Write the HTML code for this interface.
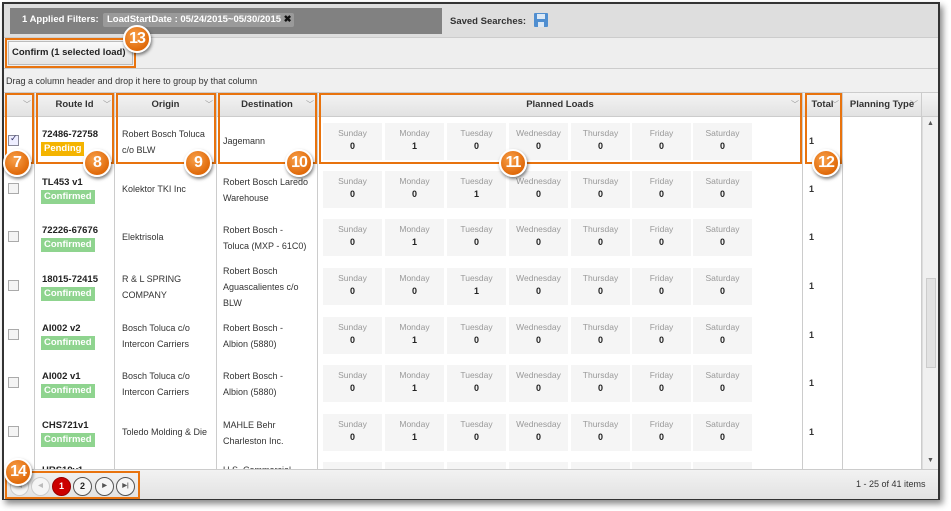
<!DOCTYPE html>
<html><head><meta charset="utf-8"><style>
*{margin:0;padding:0;box-sizing:border-box}
body{width:951px;height:511px;background:#fff;font-family:"Liberation Sans",Arial,sans-serif;font-size:9px;color:#222;position:relative;overflow:hidden}
.a{position:absolute}
#frame{left:2px;top:2px;width:938px;height:498px;border:2px solid #333;box-shadow:3px 4px 6px rgba(0,0,0,.45);background:#e6e6e6;overflow:hidden}
.hdr{position:absolute;top:93px;height:24px;background:linear-gradient(#f4f4f4,#e2e2e2);border-right:1px solid #ccc;border-bottom:1px solid #ccc;font-weight:bold;font-size:9.5px;color:#333;text-align:center;line-height:23px}
.car{position:absolute;right:3px;top:0;color:#999;font-weight:normal;font-size:8px}
.col{position:absolute;top:117px;height:352px;background:#fff;border-right:1px solid #ccc}
.row{position:absolute;left:0;width:922px;height:49px}
.cb{position:absolute;left:8px;width:11px;height:11px;border:1px solid #aaa;background:#f4f4f4}
.id{position:absolute;left:42px;font-weight:bold;font-size:9.5px;color:#222}
.tag{position:absolute;left:41px;height:14px;padding:0 3px;font-weight:bold;font-size:9.5px;color:#fff;line-height:14px}
.txt{position:absolute;font-size:9px;line-height:16px;color:#333}
.day{position:absolute;width:59px;height:37px;background:#f5f5f5;text-align:center}
.day i{display:block;font-style:normal;color:#999;font-size:8.5px;margin-top:5px}
.day b{display:block;font-size:9px;color:#222;margin-top:3px}
.ob{position:absolute;border:2.5px solid #e8730e}
.nc{position:absolute;width:28px;height:28px;border-radius:50%;background:radial-gradient(circle at 40% 35%,#f8a04a,#e06a0a 70%);border:2px solid #fff;box-shadow:1px 2px 3px rgba(0,0,0,.5);color:#fff;font-weight:bold;font-size:16px;text-align:center;line-height:24px;letter-spacing:-1px}
.pg{position:absolute;top:477px;width:19px;height:19px;border-radius:50%;border:1px solid #555;background:#f5f5f5;text-align:center;line-height:17px;font-size:9px;font-weight:bold}
</style></head><body>
<div id="frame" class="a">
</div>
<!-- top filter -->
<div class="a" style="left:4px;top:4px;width:934px;height:33px;background:#dedede"></div>
<div class="a" style="left:10px;top:8px;width:432px;height:26px;background:#818181"></div>
<div class="a" style="left:22px;top:14px;color:#fff;font-weight:bold;font-size:9.5px">1 Applied Filters:</div>
<div class="a" style="left:103px;top:13px;width:191px;height:14px;background:#9a9a9a;border-radius:2px;color:#fff;font-weight:bold;font-size:9.5px;line-height:14px;padding-left:4px">LoadStartDate : 05/24/2015~05/30/2015 <span style="color:#111">✖</span></div>
<div class="a" style="left:450px;top:16px;font-weight:bold;font-size:9.5px;color:#333">Saved Searches:</div>
<svg class="a" style="left:534px;top:13px" width="14" height="14" viewBox="0 0 14 14"><rect x="0" y="0" width="14" height="14" rx="1" fill="#4f8ed0"/><rect x="3" y="1" width="8" height="5" fill="#dbe8f5"/><rect x="4" y="9" width="6" height="5" fill="#dbe8f5"/></svg>
<!-- toolbar -->
<div class="a" style="left:4px;top:37px;width:934px;height:32px;background:#eeeeee;border-top:1px solid #ccc;border-bottom:1px solid #ccc"></div>
<div class="a" style="left:8px;top:41px;width:125px;height:24px;background:linear-gradient(#fafafa,#e4e4e4);border:1px solid #bbb;font-weight:bold;font-size:9.5px;line-height:22px;padding-left:3px;color:#222">Confirm (1 selected load)</div>
<div class="a" style="left:4px;top:69px;width:934px;height:24px;background:#f0f0f0;border-bottom:1px solid #ccc"></div>
<div class="a" style="left:6px;top:76px;font-size:9px;color:#333">Drag a column header and drop it here to group by that column</div>
<!-- headers -->
<div class="hdr" style="left:4px;width:31px"><span class="car">﹀</span></div>
<div class="hdr" style="left:35px;width:80px">Route Id<span class="car">﹀</span></div>
<div class="hdr" style="left:115px;width:102px">Origin<span class="car">﹀</span></div>
<div class="hdr" style="left:217px;width:101px">Destination<span class="car">﹀</span></div>
<div class="hdr" style="left:318px;width:485px">Planned Loads<span class="car">﹀</span></div>
<div class="hdr" style="left:803px;width:40px">Total<span class="car">﹀</span></div>
<div class="hdr" style="left:843px;width:79px">Planning Type<span class="car">﹀</span></div>
<div class="hdr" style="left:922px;width:16px;border-right:none"></div>
<!-- columns bg -->
<div class="col" style="left:4px;width:31px"></div>
<div class="col" style="left:35px;width:80px"></div>
<div class="col" style="left:115px;width:102px"></div>
<div class="col" style="left:217px;width:101px"></div>
<div class="col" style="left:318px;width:485px"></div>
<div class="col" style="left:803px;width:40px"></div>
<div class="col" style="left:843px;width:79px"></div>
<div class="a" style="left:922px;top:117px;width:16px;height:352px;background:#f0f0f0;border-left:1px solid #ddd"></div>
<div class="a" style="left:926px;top:278px;width:10px;height:90px;background:#e2e2e2;border:1px solid #ccc"></div>
<div class="a" style="left:927px;top:120px;font-size:7px;color:#555">▲</div>
<div class="a" style="left:927px;top:457px;font-size:7px;color:#555">▼</div>

<div class="a" style="left:4px;top:117px;width:918px;height:352px;overflow:hidden">
<!-- row1 -->
<div class="row" style="top:0;left:-4px">
<div class="cb" style="top:18px;border-color:#889;background:#eef"><span style="position:absolute;left:1px;top:-3px;font-size:9px;color:#336">✓</span></div>
<div class="id" style="top:12px">72486-72758</div><div class="tag" style="top:25px;background:#f4b400">Pending</div>
<div class="txt" style="left:122px;top:9px">Robert Bosch Toluca<br>c/o BLW</div>
<div class="txt" style="left:223px;top:16px">Jagemann</div>
<div class="day" style="left:323px;top:6px"><i>Sunday</i><b>0</b></div><div class="day" style="left:385px;top:6px"><i>Monday</i><b>1</b></div><div class="day" style="left:447px;top:6px"><i>Tuesday</i><b>0</b></div><div class="day" style="left:509px;top:6px"><i>Wednesday</i><b>0</b></div><div class="day" style="left:571px;top:6px"><i>Thursday</i><b>0</b></div><div class="day" style="left:632px;top:6px"><i>Friday</i><b>0</b></div><div class="day" style="left:693px;top:6px"><i>Saturday</i><b>0</b></div>
<div class="txt" style="left:809px;top:16px;font-weight:bold">1</div></div>
<!-- row2 -->
<div class="row" style="top:48px;left:-4px">
<div class="cb" style="top:18px"></div>
<div class="id" style="top:12px">TL453 v1</div><div class="tag" style="top:25px;background:#8fd48f">Confirmed</div>
<div class="txt" style="left:122px;top:16px">Kolektor TKI Inc</div>
<div class="txt" style="left:223px;top:9px">Robert Bosch Laredo<br>Warehouse</div>
<div class="day" style="left:323px;top:6px"><i>Sunday</i><b>0</b></div><div class="day" style="left:385px;top:6px"><i>Monday</i><b>0</b></div><div class="day" style="left:447px;top:6px"><i>Tuesday</i><b>1</b></div><div class="day" style="left:509px;top:6px"><i>Wednesday</i><b>0</b></div><div class="day" style="left:571px;top:6px"><i>Thursday</i><b>0</b></div><div class="day" style="left:632px;top:6px"><i>Friday</i><b>0</b></div><div class="day" style="left:693px;top:6px"><i>Saturday</i><b>0</b></div>
<div class="txt" style="left:809px;top:16px;font-weight:bold">1</div></div>
<!-- row3 -->
<div class="row" style="top:96px;left:-4px">
<div class="cb" style="top:18px"></div>
<div class="id" style="top:12px">72226-67676</div><div class="tag" style="top:25px;background:#8fd48f">Confirmed</div>
<div class="txt" style="left:122px;top:16px">Elektrisola</div>
<div class="txt" style="left:223px;top:9px">Robert Bosch -<br>Toluca (MXP - 61C0)</div>
<div class="day" style="left:323px;top:6px"><i>Sunday</i><b>0</b></div><div class="day" style="left:385px;top:6px"><i>Monday</i><b>1</b></div><div class="day" style="left:447px;top:6px"><i>Tuesday</i><b>0</b></div><div class="day" style="left:509px;top:6px"><i>Wednesday</i><b>0</b></div><div class="day" style="left:571px;top:6px"><i>Thursday</i><b>0</b></div><div class="day" style="left:632px;top:6px"><i>Friday</i><b>0</b></div><div class="day" style="left:693px;top:6px"><i>Saturday</i><b>0</b></div>
<div class="txt" style="left:809px;top:16px;font-weight:bold">1</div></div>
<!-- row4 -->
<div class="row" style="top:145px;left:-4px">
<div class="cb" style="top:18px"></div>
<div class="id" style="top:12px">18015-72415</div><div class="tag" style="top:25px;background:#8fd48f">Confirmed</div>
<div class="txt" style="left:122px;top:9px">R &amp; L SPRING<br>COMPANY</div>
<div class="txt" style="left:223px;top:1px">Robert Bosch<br>Aguascalientes c/o<br>BLW</div>
<div class="day" style="left:323px;top:6px"><i>Sunday</i><b>0</b></div><div class="day" style="left:385px;top:6px"><i>Monday</i><b>0</b></div><div class="day" style="left:447px;top:6px"><i>Tuesday</i><b>1</b></div><div class="day" style="left:509px;top:6px"><i>Wednesday</i><b>0</b></div><div class="day" style="left:571px;top:6px"><i>Thursday</i><b>0</b></div><div class="day" style="left:632px;top:6px"><i>Friday</i><b>0</b></div><div class="day" style="left:693px;top:6px"><i>Saturday</i><b>0</b></div>
<div class="txt" style="left:809px;top:16px;font-weight:bold">1</div></div>
<!-- row5 -->
<div class="row" style="top:194px;left:-4px">
<div class="cb" style="top:18px"></div>
<div class="id" style="top:12px">AI002 v2</div><div class="tag" style="top:25px;background:#8fd48f">Confirmed</div>
<div class="txt" style="left:122px;top:9px">Bosch Toluca c/o<br>Intercon Carriers</div>
<div class="txt" style="left:223px;top:9px">Robert Bosch -<br>Albion (5880)</div>
<div class="day" style="left:323px;top:6px"><i>Sunday</i><b>0</b></div><div class="day" style="left:385px;top:6px"><i>Monday</i><b>1</b></div><div class="day" style="left:447px;top:6px"><i>Tuesday</i><b>0</b></div><div class="day" style="left:509px;top:6px"><i>Wednesday</i><b>0</b></div><div class="day" style="left:571px;top:6px"><i>Thursday</i><b>0</b></div><div class="day" style="left:632px;top:6px"><i>Friday</i><b>0</b></div><div class="day" style="left:693px;top:6px"><i>Saturday</i><b>0</b></div>
<div class="txt" style="left:809px;top:16px;font-weight:bold">1</div></div>
<!-- row6 -->
<div class="row" style="top:242px;left:-4px">
<div class="cb" style="top:18px"></div>
<div class="id" style="top:12px">AI002 v1</div><div class="tag" style="top:25px;background:#8fd48f">Confirmed</div>
<div class="txt" style="left:122px;top:9px">Bosch Toluca c/o<br>Intercon Carriers</div>
<div class="txt" style="left:223px;top:9px">Robert Bosch -<br>Albion (5880)</div>
<div class="day" style="left:323px;top:6px"><i>Sunday</i><b>0</b></div><div class="day" style="left:385px;top:6px"><i>Monday</i><b>1</b></div><div class="day" style="left:447px;top:6px"><i>Tuesday</i><b>0</b></div><div class="day" style="left:509px;top:6px"><i>Wednesday</i><b>0</b></div><div class="day" style="left:571px;top:6px"><i>Thursday</i><b>0</b></div><div class="day" style="left:632px;top:6px"><i>Friday</i><b>0</b></div><div class="day" style="left:693px;top:6px"><i>Saturday</i><b>0</b></div>
<div class="txt" style="left:809px;top:16px;font-weight:bold">1</div></div>
<!-- row7 -->
<div class="row" style="top:291px;left:-4px">
<div class="cb" style="top:18px"></div>
<div class="id" style="top:12px">CHS721v1</div><div class="tag" style="top:25px;background:#8fd48f">Confirmed</div>
<div class="txt" style="left:122px;top:16px">Toledo Molding &amp; Die</div>
<div class="txt" style="left:223px;top:9px">MAHLE Behr<br>Charleston Inc.</div>
<div class="day" style="left:323px;top:6px"><i>Sunday</i><b>0</b></div><div class="day" style="left:385px;top:6px"><i>Monday</i><b>1</b></div><div class="day" style="left:447px;top:6px"><i>Tuesday</i><b>0</b></div><div class="day" style="left:509px;top:6px"><i>Wednesday</i><b>0</b></div><div class="day" style="left:571px;top:6px"><i>Thursday</i><b>0</b></div><div class="day" style="left:632px;top:6px"><i>Friday</i><b>0</b></div><div class="day" style="left:693px;top:6px"><i>Saturday</i><b>0</b></div>
<div class="txt" style="left:809px;top:16px;font-weight:bold">1</div></div>
<!-- row8 partial -->
<div class="row" style="top:339px;left:-4px">
<div class="id" style="top:9px">HRS19v1</div>
<div class="txt" style="left:223px;top:6px">U.S. Commercial</div>
<div class="day" style="left:323px;top:6px"></div><div class="day" style="left:385px;top:6px"></div><div class="day" style="left:447px;top:6px"></div><div class="day" style="left:509px;top:6px"></div><div class="day" style="left:571px;top:6px"></div><div class="day" style="left:632px;top:6px"></div><div class="day" style="left:693px;top:6px"></div>
</div>
</div>
<!-- pager -->
<div class="a" style="left:4px;top:469px;width:934px;height:30px;background:linear-gradient(#f2f2f2,#e2e2e2);border-top:1px solid #ccc"></div>
<div class="pg" style="left:10px;border-color:#ccc;color:#bbb;font-size:6px">◀</div>
<div class="pg" style="left:31px;border-color:#ccc;color:#bbb;font-size:6px">◀</div>
<div class="pg" style="left:52px;background:#c00;border-color:#900;color:#fff">1</div>
<div class="pg" style="left:73px">2</div>
<div class="pg" style="left:95px;font-size:6px;color:#555">▶</div>
<div class="pg" style="left:116px;font-size:6px;color:#555">▶|</div>
<div class="a" style="left:856px;top:479px;font-size:9px;color:#333">1 - 25 of 41 items</div>
<!-- annotations -->
<div class="ob" style="left:5px;top:38px;width:131px;height:30px"></div>
<div class="ob" style="left:5px;top:93px;width:29px;height:71px"></div>
<div class="ob" style="left:36px;top:93px;width:78px;height:71px"></div>
<div class="ob" style="left:116px;top:93px;width:100px;height:71px"></div>
<div class="ob" style="left:218px;top:93px;width:99px;height:71px"></div>
<div class="ob" style="left:319px;top:93px;width:483px;height:71px"></div>
<div class="ob" style="left:805px;top:93px;width:37px;height:71px"></div>
<div class="ob" style="left:5px;top:471px;width:135px;height:28px"></div>
<div class="nc" style="left:123px;top:25px">13</div>
<div class="nc" style="left:3px;top:149px">7</div>
<div class="nc" style="left:83px;top:149px">8</div>
<div class="nc" style="left:184px;top:149px">9</div>
<div class="nc" style="left:285px;top:149px">10</div>
<div class="nc" style="left:499px;top:149px">11</div>
<div class="nc" style="left:812px;top:149px">12</div>
<div class="nc" style="left:4px;top:458px">14</div>
</body></html>
